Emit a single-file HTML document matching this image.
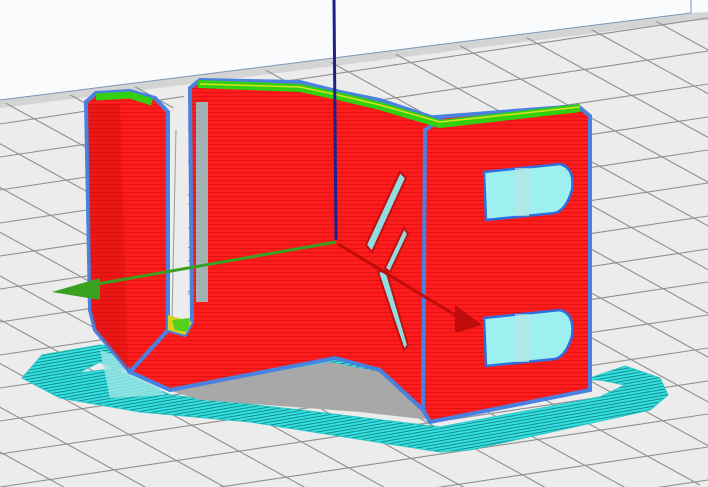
<!DOCTYPE html>
<html><head><meta charset="utf-8"><style>html,body{margin:0;padding:0;background:#fafbfd;width:708px;height:487px;overflow:hidden}svg{display:block}</style></head>
<body>
<svg width="708" height="487" viewBox="0 0 708 487" xmlns="http://www.w3.org/2000/svg">
<defs>
<clipPath id="plate"><polygon points="0,104 691,17 708,16 708,487 0,487"/></clipPath>
<pattern id="stripe" width="4" height="4" patternUnits="userSpaceOnUse"><rect width="4" height="4" fill="#ff1c1c"/><rect width="4" height="1" fill="#e01212"/></pattern>
<pattern id="brim" width="3" height="3" patternUnits="userSpaceOnUse" patternTransform="rotate(80)"><rect width="3" height="3" fill="#33e3e3"/><rect width="1" height="3" fill="#1a8a8a"/></pattern>
</defs>
<rect width="708" height="487" fill="#fafbfd"/>
<polygon points="0,100 691,13 708,12 708,487 0,487" fill="#d4d4d4"/>
<polygon points="0,108 691,21 708,20 708,487 0,487" fill="#ececec"/>
<line x1="0" y1="100" x2="691" y2="13" stroke="#7d96b8" stroke-width="1"/>
<line x1="691" y1="0" x2="691" y2="13" stroke="#7d96b8" stroke-width="1"/>
<g clip-path="url(#plate)" stroke="#8f8f8f" stroke-width="1.1">
<line x1="0" y1="124" x2="708" y2="18"/>
<line x1="0" y1="157" x2="708" y2="51"/>
<line x1="0" y1="190" x2="708" y2="84"/>
<line x1="0" y1="223" x2="708" y2="117"/>
<line x1="0" y1="256" x2="708" y2="150"/>
<line x1="0" y1="289" x2="708" y2="183"/>
<line x1="0" y1="322" x2="708" y2="216"/>
<line x1="0" y1="355" x2="708" y2="249"/>
<line x1="0" y1="388" x2="708" y2="282"/>
<line x1="0" y1="421" x2="708" y2="315"/>
<line x1="0" y1="454" x2="708" y2="348"/>
<line x1="0" y1="487" x2="708" y2="381"/>
<line x1="0" y1="520" x2="708" y2="414"/>
<line x1="0" y1="553" x2="708" y2="447"/>
<line x1="0" y1="586" x2="708" y2="480"/>
<line x1="-650" y1="182" x2="50" y2="567"/>
<line x1="-585" y1="174" x2="115" y2="559"/>
<line x1="-520" y1="166" x2="180" y2="551"/>
<line x1="-455" y1="157" x2="245" y2="542"/>
<line x1="-390" y1="149" x2="310" y2="534"/>
<line x1="-325" y1="141" x2="375" y2="526"/>
<line x1="-260" y1="133" x2="440" y2="518"/>
<line x1="-195" y1="125" x2="505" y2="510"/>
<line x1="-130" y1="116" x2="570" y2="501"/>
<line x1="-65" y1="108" x2="635" y2="493"/>
<line x1="0" y1="100" x2="700" y2="485"/>
<line x1="65" y1="92" x2="765" y2="477"/>
<line x1="130" y1="84" x2="830" y2="469"/>
<line x1="195" y1="75" x2="895" y2="460"/>
<line x1="260" y1="67" x2="960" y2="452"/>
<line x1="325" y1="59" x2="1025" y2="444"/>
<line x1="390" y1="51" x2="1090" y2="436"/>
<line x1="455" y1="43" x2="1155" y2="428"/>
<line x1="520" y1="34" x2="1220" y2="419"/>
<line x1="585" y1="26" x2="1285" y2="411"/>
<line x1="650" y1="18" x2="1350" y2="403"/>
</g>
<path fill-rule="evenodd" fill="url(#brim)" stroke="#2bc6c6" stroke-width="1" d="M22,378 L42,355 L100,345 L590,378 L625,366 L660,378 L668,395 L650,410 L470,450 L440,452 L250,422 L140,412 L60,398 Z M78,373 L100,362 L170,395 L300,410 L440,427 L600,397 L625,385 L600,380 L300,375 L120,368 Z"/>
<polygon points="168,390 330,362 380,372 432,420 360,412 200,400" fill="#a8a8a8"/>
<polygon points="100,350 140,365 165,395 110,398" fill="#9fe6e6" opacity="0.8"/>
<g stroke="#4a80e0" stroke-width="4" fill="url(#stripe)">
<polygon points="423,118 578,106 590,116 590,390 430,422 423,410"/>
<polygon points="190,88 200,80 300,82 340,92 380,100 440,120 425,130 423,410 380,370 335,358 170,390 130,372 168,330 185,335 192,322"/>
<polygon points="86,102 96,93 130,91 155,98 168,112 168,330 130,372 95,330 90,310"/>
</g>
<polygon points="88,104 120,104 128,370 96,330 91,310" fill="#d81212" opacity="0.5"/>
<polygon points="170,112 188,92 188,318 180,326 170,320" fill="#ececec"/>
<line x1="176" y1="130" x2="172" y2="320" stroke="#9a9a9a"/>
<polygon points="168,315 192,322 185,335 168,330" fill="#d9d020"/>
<polygon points="172,320 190,318 188,332 175,330" fill="#55d01a"/>
<polyline points="198,84 300,88 338,96 380,106 440,124 580,108" fill="none" stroke="#33d010" stroke-width="8"/>
<polyline points="200,84 300,87 338,95 380,105 440,122 580,107" fill="none" stroke="#d8e020" stroke-width="1.5"/>
<polyline points="96,97 130,95 152,102" fill="none" stroke="#33d010" stroke-width="7"/>
<rect x="196" y="102" width="12" height="200" fill="#8fd8dc" opacity="0.8"/>
<polygon points="366,245 400,172 406,178 372,252" fill="#8fdde0" stroke="#c01010" stroke-width="2"/>
<polygon points="385,268 404,228 408,234 390,272" fill="#8fdde0" stroke="#c01010" stroke-width="2"/>
<polygon points="378,272 386,270 408,345 404,350" fill="#8fdde0" stroke="#c01010" stroke-width="2"/>
<g stroke="#2e6ee0" stroke-width="2.5">
<path d="M484,172 L560,164 Q575,168 572,190 Q566,210 555,213 L486,220 Z" fill="#9ef0f0"/>
<path d="M484,318 L560,310 Q575,314 572,336 Q566,356 555,359 L486,366 Z" fill="#9ef0f0"/>
</g>
<rect x="515" y="168" width="14" height="48" fill="#b8e4e4" opacity="0.7"/>
<rect x="515" y="314" width="14" height="48" fill="#b8e4e4" opacity="0.7"/>
<line x1="334" y1="0" x2="336" y2="240" stroke="#20208a" stroke-width="3"/>
<line x1="336" y1="242" x2="80" y2="287" stroke="#3aa020" stroke-width="3"/>
<polygon points="52,292 100,278 100,300" fill="#3aa020"/>
<line x1="338" y1="244" x2="460" y2="318" stroke="#c00c0c" stroke-width="3"/>
<polygon points="455,305 482,325 455,333" fill="#c00c0c"/>
</svg>
</body></html>
